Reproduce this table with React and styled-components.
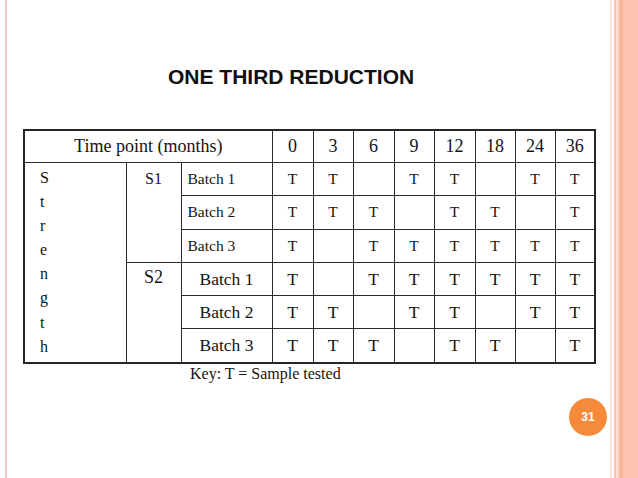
import React from "react";
import styled, { createGlobalStyle } from "styled-components";

const GlobalStyle = createGlobalStyle`
  html, body {
    margin: 0;
    padding: 0;
  }
  body {
    width: 638px;
    height: 478px;
    overflow: hidden;
    background: #ffffff;
  }
`;

const Slide = styled.div`
  width: 638px;
  height: 478px;
  box-sizing: border-box;
  padding-left: 23px;
  background: linear-gradient(
    to right,
    #ffffff 0px,
    #ffffff 5px,
    #f6cbbd 5px,
    #f6cbbd 7px,
    #ffffff 7px,
    #ffffff 610px,
    #fbe1d7 610px,
    #fbe1d7 612px,
    #ffffff 612px,
    #ffffff 614px,
    #f8c0aa 614px,
    #f8c0aa 616px,
    #fde2d8 616px,
    #fde2d8 618px,
    #fcc5b1 618px,
    #fcc5b1 620px,
    #f7b49b 620px,
    #f7b49b 623px,
    #fcc4af 623px,
    #fcc4af 638px
  );
  display: flex;
  flex-direction: column;
`;

const Title = styled.h1`
  margin: 65px 0 0 145px;
  font-family: "Liberation Sans", Arial, sans-serif;
  font-size: 21px;
  font-weight: bold;
  line-height: 24px;
  color: #111;
`;

const Table = styled.table`
  margin-top: 40px;
  width: 571px;
  table-layout: fixed;
  border-collapse: collapse;
  border: 2px solid #262626;
  font-family: "Liberation Serif", "Times New Roman", serif;
  color: #141414;
`;

const HeadCell = styled.th`
  height: 31px;
  padding: 0;
  border: 1px solid #2b2b2b;
  font-size: 18px;
  font-weight: normal;
  text-align: center;
`;

const Cell = styled.td`
  height: 32.3px;
  padding: 0 ${(p) => (p.$left ? "6px" : "0")};
  border: 1px solid #2b2b2b;
  font-size: ${(p) => (p.$large ? "17.5px" : "15.5px")};
  text-align: ${(p) => (p.$left ? "left" : "center")};
  vertical-align: middle;
`;

const GroupCell = styled.td`
  padding: ${(p) => p.$pad};
  border: 1px solid #2b2b2b;
  font-size: ${(p) => (p.$large ? "18px" : "16px")};
  text-align: center;
  vertical-align: top;
`;

const StrengthCell = styled.td`
  padding: 3px 0 0 15px;
  border: 1px solid #2b2b2b;
  vertical-align: top;
  font-size: 16px;
`;

const Letter = styled.div`
  line-height: 24.1px;
`;

const Key = styled.div`
  margin: 0 0 0 167px;
  font-family: "Liberation Serif", "Times New Roman", serif;
  font-size: 16px;
  line-height: 20px;
  color: #141414;
`;

const Footer = styled.div`
  width: 584px;
  margin-top: 14px;
  display: flex;
  justify-content: flex-end;
`;

const PageNumber = styled.div`
  width: 38px;
  height: 38px;
  border-radius: 50%;
  background: #f58a3a;
  color: #ffffff;
  font-family: "Liberation Sans", Arial, sans-serif;
  font-weight: bold;
  font-size: 12px;
  display: flex;
  align-items: center;
  justify-content: center;
`;

const months = ["0", "3", "6", "9", "12", "18", "24", "36"];
const widths = [102, 55, 91, 41, 40, 41, 40, 41, 40, 40, 40];

// "_" marks a time point that is not tested
const groups = [
  { name: "S1", large: false, pad: "7px 0 0", rows: ["TT_TT_TT", "TTT_TT_T", "T_TTTTTT"] },
  { name: "S2", large: true, pad: "4px 0 0", rows: ["T_TTTTTT", "TT_TT_TT", "TTT_TT_T"] },
];

const App = () => {
  return (
    <>
      <GlobalStyle />
      <Slide>
        <Title>ONE THIRD REDUCTION</Title>
        <Table>
          <colgroup>
            {widths.map((w, i) => (
              <col key={i} style={{ width: w }} />
            ))}
          </colgroup>
          <thead>
            <tr>
              <HeadCell colSpan={3}>Time point (months)</HeadCell>
              {months.map((m) => (
                <HeadCell key={m}>{m}</HeadCell>
              ))}
            </tr>
          </thead>
          <tbody>
            {groups.map((g, gi) =>
              g.rows.map((row, ri) => (
                <tr key={g.name + ri}>
                  {gi === 0 && ri === 0 && (
                    <StrengthCell rowSpan={6}>
                      {"Strength".split("").map((c, i) => (
                        <Letter key={i}>{c}</Letter>
                      ))}
                    </StrengthCell>
                  )}
                  {ri === 0 && (
                    <GroupCell rowSpan={3} $large={g.large} $pad={g.pad}>
                      {g.name}
                    </GroupCell>
                  )}
                  <Cell $left={!g.large} $large={g.large}>
                    Batch {ri + 1}
                  </Cell>
                  {row.split("").map((c, ci) => (
                    <Cell key={ci} $large={g.large}>
                      {c === "T" ? "T" : ""}
                    </Cell>
                  ))}
                </tr>
              ))
            )}
          </tbody>
        </Table>
        <Key>Key: T = Sample tested</Key>
        <Footer>
          <PageNumber>31</PageNumber>
        </Footer>
      </Slide>
    </>
  );
};

export default App;
